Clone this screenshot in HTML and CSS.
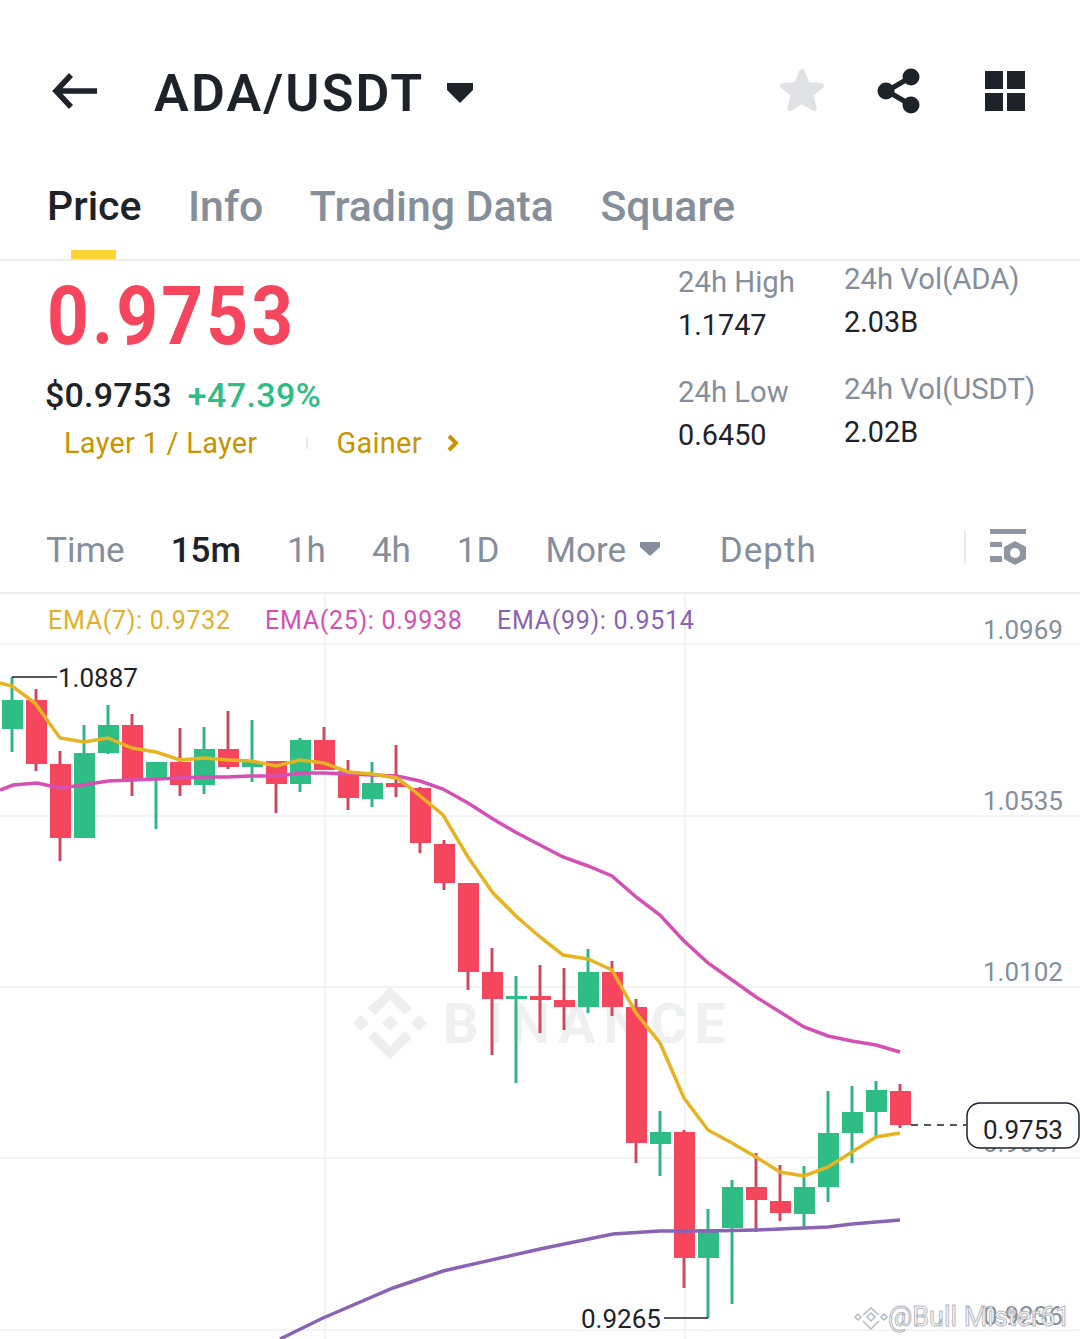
FILE: index.html
```html
<!DOCTYPE html>
<html lang="en">
<head>
    <meta charset="UTF-8">
    <meta name="viewport" content="width=device-width, initial-scale=1.0">
    <title>ADA/USDT</title>
    <link rel="stylesheet" href="styles.css">
</head>
<body>
<div class="container">
    <div class="header">
        <svg class="back" width="46" height="36" viewBox="0 0 46 36"><path d="M19 2L4 18L19 34M4 18H45" fill="none" stroke="#1e2329" stroke-width="5.500"/></svg>
        <h1>ADA/USDT</h1>
        <svg class="caret" width="28" height="20" viewBox="0 0 28 20"><path d="M1 0H27V7L14 20L1 7Z" fill="#1e2329"/></svg>
        <div class="header-icons">
            <svg width="46" height="46" viewBox="0 0 46 46"><path d="M23 1C24.500 1 25.500 2 26 3.500L30 14.300L41.500 15C45 15.300 46 18 43.500 20.300L34.500 27.600L37.500 39C38.300 42.300 36 44 33.300 42.400L23 36.300L12.700 42.400C10 44 7.700 42.300 8.500 39L11.500 27.600L2.500 20.300C0 18 1 15.300 4.500 15L16 14.300L20 3.500C20.500 2 21.500 1 23 1Z" fill="#dfe1e5"/></svg>
            <svg width="44" height="46" viewBox="0 0 44 46"><path d="M10 23L34 9M10 23L34 37" stroke="#1e2329" stroke-width="5"/><circle cx="9" cy="23" r="8.500" fill="#1e2329"/><circle cx="34" cy="9" r="8.500" fill="#1e2329"/><circle cx="34" cy="37" r="8.500" fill="#1e2329"/></svg>
            <svg class="grid-icon" width="40" height="40" viewBox="0 0 40 40"><path d="M0 0H18V18H0ZM22 0H40V18H22ZM0 22H18V40H0ZM22 22H40V40H22Z" fill="#1e2329"/></svg>
        </div>
    </div>

    <div class="tabs">
        <div class="tab active">Price</div>
        <div class="tab">Info</div>
        <div class="tab">Trading Data</div>
        <div class="tab">Square</div>
    </div>

    <div class="stats">
        <div class="stats-left">
            <div class="last-price">0.9753</div>
            <div class="change-row">
                <span class="usd-price">$0.9753</span>
                <span class="change">+47.39%</span>
            </div>
            <div class="tags">
                <span>Layer 1 / Layer</span>
                <i class="tag-line"></i>
                <span>Gainer</span>
                <svg width="12" height="18" viewBox="0 0 12 18"><path d="M2 2L9 9L2 16" fill="none" stroke="#c99400" stroke-width="4"/></svg>
            </div>
        </div>
        <div class="stat-col">
            <div class="stat-label">24h High</div>
            <div class="stat-value">1.1747</div>
            <div class="stat-label second">24h Low</div>
            <div class="stat-value">0.6450</div>
        </div>
        <div class="stat-col shifted">
            <div class="stat-label">24h Vol(ADA)</div>
            <div class="stat-value">2.03B</div>
            <div class="stat-label second">24h Vol(USDT)</div>
            <div class="stat-value">2.02B</div>
        </div>
    </div>

    <div class="intervals">
        <span>Time</span>
        <span class="selected">15m</span>
        <span>1h</span>
        <span>4h</span>
        <span>1D</span>
        <span class="more">More
            <svg width="20" height="14" viewBox="0 0 20 14"><path d="M0 0H20V5L10 14L0 5Z" fill="#858e9b"/></svg>
        </span>
        <span class="depth">Depth</span>
        <i class="interval-line"></i>
        <svg class="settings" width="36" height="36" viewBox="0 0 36 36"><path d="M0 0H36V5H0ZM0 13H12V18H0ZM0 27H12V33H0Z" fill="#8f96a3"/><path d="M25 12L36 18V30L25 36L14 30V18Z" fill="#8f96a3"/><circle cx="25" cy="24" r="5" fill="#fff"/></svg>
    </div>

    <div class="chart">
        <svg width="1080" height="745" viewBox="0 594 1080 745">
            <!-- grid -->
            <path class="grid" d="M0 644H1080M0 816H1080M0 987H1080M0 1158H1080M0 1330H1080M325 594V1339M685 594V1339"/>

            <!-- watermark -->
            <path class="mark" d="M390 987L412 1008L405 1015L390 1000L375 1015L368 1008ZM390 1059L368 1038L375 1031L390 1046L405 1031L412 1038ZM361 1015L369 1023L361 1031L353 1023ZM419 1015L427 1023L419 1031L411 1023ZM390 1015L398 1023L390 1031L382 1023Z"/>
            <text class="mark-text" x="443" y="1043" textLength="283">BINANCE</text>

            <!-- candles -->
            <path class="wick-up" d="M12 677V752M84 725V838M108 705V754M156 762V829M204 727V794M252 720V782M300 738V792M372 762V807M516 976V1083M588 949V1013M660 1111V1176M708 1209V1318M732 1180V1304M804 1166V1228M828 1091V1202M852 1086V1163M876 1081V1136"/>
            <path class="wick-down" d="M36 689V771M60 751V861M132 714V796M180 728V796M228 711V769M276 761V813M324 727V770M348 760V810M396 745V797M420 787V853M444 840V890M468 883V990M492 948V1055M540 965V1033M564 968V1030M612 961V1016M636 999V1163M684 1130V1288M756 1153V1232M780 1165V1221M900 1084V1128"/>
            <path class="body-up" d="M2 700h21v29h-21zM74 753h21v85h-21zM98 725h21v28h-21zM146 762h21v16h-21zM194 749h21v36h-21zM242 762h21v5h-21zM290 740h21v44h-21zM362 783h21v16h-21zM506 996h21v3h-21zM578 972h21v35h-21zM650 1132h21v12h-21zM698 1229h21v29h-21zM722 1187h21v41h-21zM794 1187h21v27h-21zM818 1133h21v54h-21zM842 1112h21v21h-21zM866 1090h21v22h-21z"/>
            <path class="body-down" d="M26 700h21v64h-21zM50 764h21v74h-21zM122 725h21v55h-21zM170 762h21v23h-21zM218 749h21v18h-21zM266 761h21v23h-21zM314 740h21v30h-21zM338 771h21v27h-21zM386 783h21v4h-21zM410 788h21v55h-21zM434 844h21v39h-21zM458 883h21v89h-21zM482 972h21v27h-21zM530 996h21v4h-21zM554 1000h21v7h-21zM602 972h21v35h-21zM626 1007h21v136h-21zM674 1132h21v126h-21zM746 1187h21v13h-21zM770 1201h21v12h-21zM890 1091h21v34h-21z"/>

            <!-- moving averages -->
            <polyline class="ema99" points="280,1339 323,1318 393,1288 443,1271 540,1249 613,1234 660,1231 708,1231 756,1230 804,1228 828,1227 852,1224 900,1220"/>
            <polyline class="ema25" points="0,790 13,785 37,783 60,788 83,785 108,781 133,780 157,779 180,778 203,777 227,777 250,776 277,776 302,773 325,773 348,774 372,775 397,776 420,781 443,789 468,803 493,819 517,833 540,845 563,857 588,866 612,876 636,897 660,915 683,940 708,963 756,997 804,1027 828,1036 852,1041 876,1045 900,1052"/>
            <polyline class="ema7" points="0,683 12,686 35,703 60,738 84,742 108,738 132,748 156,752 180,760 204,758 228,760 252,761 276,766 300,760 324,763 348,772 372,774 397,778 413,790 443,815 468,857 493,893 517,917 540,937 563,955 588,959 612,970 636,1013 660,1043 684,1098 708,1130 732,1143 756,1157 780,1172 804,1176 828,1167 852,1152 876,1137 900,1133"/>

            <!-- high, low and last price marks -->
            <path class="leader" d="M12 677H57M708 1318H664"/>
            <text class="price-mark" x="58" y="687">1.0887</text>
            <text class="price-mark" x="581" y="1328">0.9265</text>
            <path class="last-line" d="M911 1125H966"/>

            <!-- axis -->
            <g class="axis">
                <text x="983" y="639">1.0969</text>
                <text x="983" y="810">1.0535</text>
                <text x="983" y="981">1.0102</text>
                <text x="983" y="1152">0.9667</text>
                <text x="983" y="1325">0.9236</text>
            </g>
            <rect class="last-box" x="967" y="1103" width="112" height="45" rx="13"/>
            <text class="price-mark" x="983" y="1139">0.9753</text>

            <!-- legend -->
            <g class="legend">
                <text class="l7" x="48" y="629">EMA(7): 0.9732</text>
                <text class="l25" x="265" y="629">EMA(25): 0.9938</text>
                <text class="l99" x="497" y="629">EMA(99): 0.9514</text>
            </g>

            <!-- user watermark -->
            <path class="user-mark" d="M863 1315L871 1308L879 1315M863 1321L871 1329L879 1321M871 1313L875 1317L871 1321L867 1317ZM858 1314L861 1317L858 1320L855 1317ZM884 1314L887 1317L884 1320L881 1317Z"/>
            <text class="user-text" x="888" y="1326">@Bull Mister61</text>
        </svg>
    </div>
</div>
</body>
</html>
```
FILE: styles.css
```css
body {
    margin: 0;
    padding: 0;
    background-color: #fff;
    font-family: Roboto, "Noto Sans", sans-serif;
    color: #1e2329;
}

.container {
    width: 1080px;
    height: 1339px;
    overflow: hidden;
}

.header {
    display: flex;
    align-items: center;
    height: 186px;
    padding: 0 55px 0 52px;
    box-sizing: border-box;
}

.back {
    margin: 0 56px 4px 0;
}

h1 {
    margin: 0 22px 0 0;
    font-size: 52px;
    font-weight: 600;
    letter-spacing: 2.2px;
}

.header-icons {
    display: flex;
    align-items: center;
    gap: 52px;
    margin: 0 0 4px auto;
}

.grid-icon {
    margin-left: 12px;
}

.tabs {
    display: flex;
    gap: 46.500px;
    height: 75px;
    padding-left: 47px;
    box-sizing: border-box;
    border-bottom: 2px solid #eaecef;
}

.tab {
    position: relative;
    font-size: 42.800px;
    font-weight: 500;
    line-height: 40px;
    color: #858e9b;
}

.tab.active {
    font-size: 41px;
    color: #1e2329;
}

.tab.active::after {
    content: "";
    position: absolute;
    left: 24px;
    bottom: 0;
    width: 45px;
    height: 9px;
    background-color: #fcd535;
}

.stats {
    display: flex;
    height: 257px;
    box-sizing: border-box;
}

.stats-left {
    width: 678px;
    padding-left: 45px;
    box-sizing: border-box;
}

.last-price {
    margin: 5px 0 0 2px;
    font-size: 82px;
    line-height: 100px;
    font-weight: 700;
    color: #f6465d;
    letter-spacing: 3.500px;
    transform: scaleX(0.89);
    transform-origin: left;
}

.change-row {
    display: flex;
    gap: 16px;
    margin-top: 7px;
    font-size: 34px;
    line-height: 44px;
}

.usd-price {
    font-weight: 500;
    letter-spacing: 0.2px;
}

.change {
    color: #2ebd85;
    font-weight: 500;
    letter-spacing: 0.4px;
}

.tags {
    display: flex;
    align-items: center;
    margin-top: 6px;
    padding-left: 19px;
    font-size: 29px;
    line-height: 40px;
    letter-spacing: 0.25px;
    color: #c99400;
}

.tag-line {
    width: 2px;
    height: 12px;
    margin: 0 28px 0 49px;
    background-color: #eaecef;
}

.tags svg {
    margin-left: 25px;
}

.stat-col {
    width: 166px;
    padding-top: 1px;
}

.stat-col.shifted {
    width: 236px;
    margin-top: -3px;
}

.stat-label {
    font-size: 29.300px;
    line-height: 40px;
    color: #858e9b;
}

.stat-label.second {
    margin-top: 27px;
}

.stat-value {
    margin-top: 3px;
    font-size: 28.800px;
    line-height: 40px;
}

.intervals {
    display: flex;
    align-items: center;
    gap: 46px;
    height: 76px;
    padding: 0 54px 10px 46px;
    box-sizing: border-box;
    border-bottom: 2px solid #eaecef;
    font-size: 35px;
    color: #858e9b;
}

.selected {
    color: #1e2329;
    font-weight: 500;
}

.more svg {
    margin-left: 5px;
    vertical-align: 6px;
}

.depth {
    margin-left: 14px;
    letter-spacing: 1px;
}

.interval-line {
    width: 2px;
    height: 34px;
    margin: 0 0 6px auto;
    background-color: #eaecef;
}

.settings {
    margin: 0 0 6px -22px;
}

.chart svg {
    display: block;
}

.grid {
    stroke: #eef0f2;
    stroke-width: 1.500;
    fill: none;
}

.mark {
    fill: #eceef0;
}

.mark-text {
    font-size: 56px;
    font-weight: 700;
    fill: #eef0f2;
}

.wick-up {
    stroke: #35b587;
    stroke-width: 3;
    fill: none;
}

.wick-down {
    stroke: #cf4a60;
    stroke-width: 3;
    fill: none;
}

.body-up {
    fill: #2ebd85;
}

.body-down {
    fill: #f6465d;
}

.ema7, .ema25, .ema99 {
    fill: none;
    stroke-width: 3.500;
}

.ema7 {
    stroke: #e6b322;
}

.ema25 {
    stroke: #d64fb4;
}

.ema99 {
    stroke: #8a63b5;
}

.leader {
    stroke: #1e2329;
    stroke-width: 1.500;
    fill: none;
}

.last-line {
    stroke: #1e2329;
    stroke-width: 1.500;
    stroke-dasharray: 7 6;
    fill: none;
}

.price-mark {
    font-size: 26px;
    fill: #1e2329;
}

.axis text {
    font-size: 26px;
    fill: #858e9b;
}

.last-box {
    fill: #fff;
    stroke: #1e2329;
    stroke-width: 1.500;
}

.legend text {
    font-size: 25px;
    letter-spacing: 0.7px;
}

.l7 {
    fill: #e0b02c;
}

.l25 {
    fill: #d64fb4;
}

.l99 {
    fill: #8a63b5;
}

.user-mark {
    fill: none;
    stroke: #b5b9c0;
    stroke-width: 1.500;
}

.user-text {
    font-size: 27px;
    fill: #fff;
    stroke: #b5b9c0;
    stroke-width: 1;
}
```
